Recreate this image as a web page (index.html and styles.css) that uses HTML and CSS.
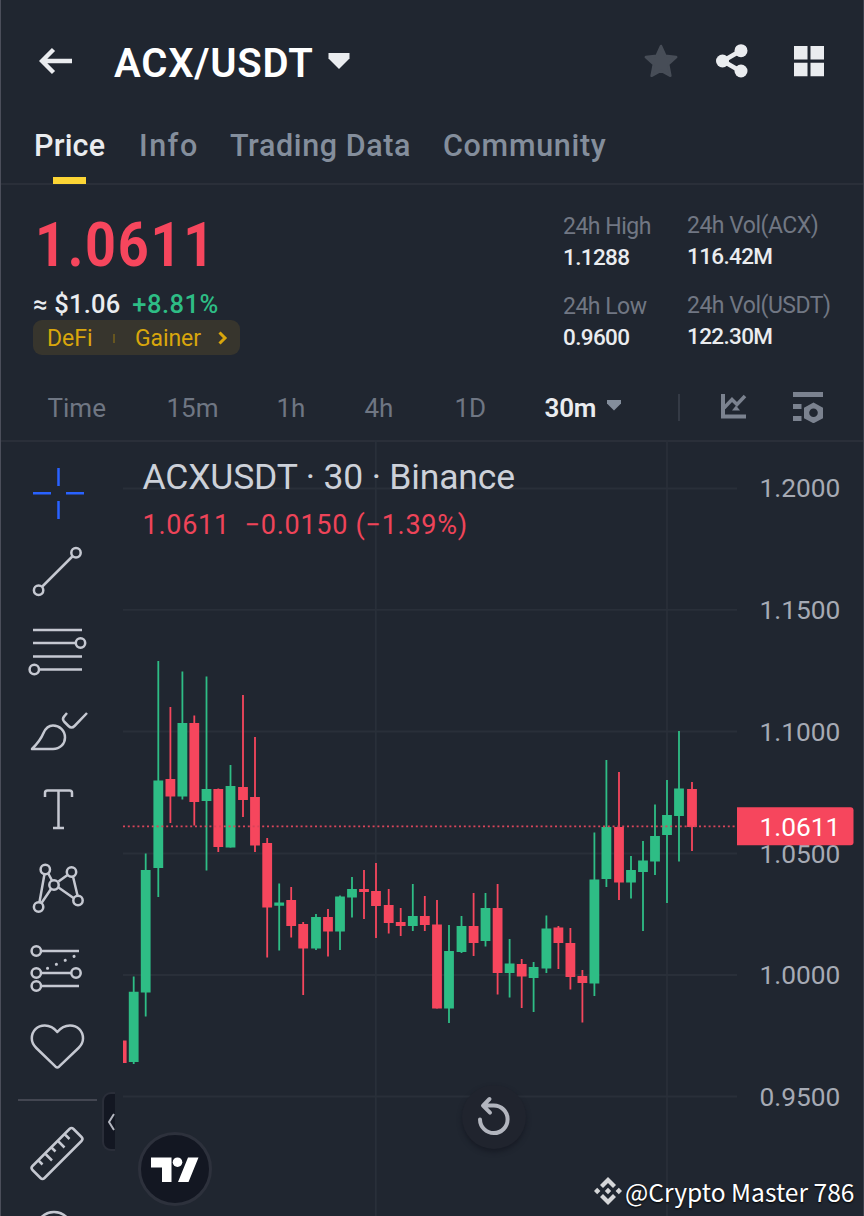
FILE: index.html
```html
<!DOCTYPE html>
<html lang="en">
<head>
<meta charset="utf-8">
<title>ACX/USDT</title>
<link rel="stylesheet" href="styles.css">
</head>
<body>
<div class="app">
  <header class="header">
    <svg class="back" width="34" height="28" viewBox="0 0 34 28"><path d="M14.500 2.500 3 14l11.500 11.500M3 14h30" fill="none" stroke="#eaecef" stroke-width="4.400"/></svg>
    <h1 class="pair">ACX/USDT</h1>
    <svg class="pair-caret" width="22" height="18" viewBox="0 0 22 18"><path d="M.5 1h21v5.500L11 17 .5 6.500z" fill="#eaecef"/></svg>
    <svg class="star" width="34" height="34" viewBox="0 0 34 34"><path d="m17 2 4.400 9.800 10.800 1.200-8 7.300 2.200 11.500L17 26.700 7.600 31.800l2.200-11.500-8-7.300 10.800-1.200z" fill="#474d57" stroke="#474d57" stroke-width="2.500" stroke-linejoin="round"/></svg>
    <svg class="share" width="34" height="34" viewBox="0 0 34 34"><path d="M26 6.500 8 17l18 10.500" fill="none" stroke="#eaecef" stroke-width="4.500"/><g fill="#eaecef"><circle cx="26" cy="6.700" r="6.500"/><circle cx="7.500" cy="17" r="6.500"/><circle cx="26" cy="27" r="6.500"/></g></svg>
    <svg class="apps" width="30" height="31" viewBox="0 0 30 31"><path d="M0 0h13.500v13.500H0zM16.500 0H30v13.500H16.500zM0 16.800h13.500v13.500H0zM16.500 16.800H30v13.500H16.500z" fill="#eaecef"/></svg>
  </header>

  <nav class="tabs">
    <span class="tab tab-price">Price</span>
    <span class="tab tab-info">Info</span>
    <span class="tab tab-data">Trading Data</span>
    <span class="tab tab-comm">Community</span>
  </nav>

  <section class="summary">
    <div class="quote">
      <div class="last"><span class="squeeze">1.0611</span></div>
      <div class="fiat"><span class="usd">≈ $1.06</span><span class="change">+8.81%</span></div>
      <div class="tags">
        <span class="tag-defi">DeFi</span><i class="tag-sep"></i><span class="tag-gain">Gainer</span>
        <svg width="10" height="14" viewBox="0 0 10 14"><path d="m1.500 1.500 5.500 5.500-5.500 5.500" fill="none" stroke="#d9a60c" stroke-width="3"/></svg>
      </div>
    </div>
    <dl class="stats">
      <div><dt>24h High</dt><dd>1.1288</dd></div>
      <div class="raised"><dt>24h Vol(ACX)</dt><dd>116.42M</dd></div>
      <div><dt>24h Low</dt><dd>0.9600</dd></div>
      <div class="raised"><dt>24h Vol(USDT)</dt><dd>122.30M</dd></div>
    </dl>
  </section>

  <nav class="intervals">
    <span class="iv iv-time">Time</span>
    <span class="iv iv-15">15m</span>
    <span class="iv iv-1h">1h</span>
    <span class="iv iv-4h">4h</span>
    <span class="iv iv-1d">1D</span>
    <span class="iv iv-active">30m</span>
    <svg class="iv-caret" width="14" height="11" viewBox="0 0 14 11"><path d="M0 0h14v3.500L7 10.500 0 3.500z" fill="#848e9c"/></svg>
    <i class="iv-sep"></i>
    <svg class="chart-ico" width="26" height="26" viewBox="0 0 26 26"><path d="M2 1v22.500h23" fill="none" stroke="#7b828f" stroke-width="4"/><path d="m3 15 8-8.500 5 5L24 3" fill="none" stroke="#7b828f" stroke-width="3.500"/><path d="m15 12.500 4 5h-8z" fill="#7b828f"/></svg>
    <svg class="set-ico" width="32" height="32" viewBox="0 0 32 32"><path d="M1 1h30v5H1zM1 13h8.500v5H1zM1 25h8.500v5H1z" fill="#7b828f"/><path fill-rule="evenodd" d="m21.500 11.500 9.500 5.300v10.500l-9.500 5-9.500-5V16.800zm0 6a4.300 4.300 0 1 0 0 8.600 4.300 4.300 0 0 0 0-8.600z" fill="#7b828f"/></svg>
  </nav>

  <main class="workspace">
    <aside class="tools">
      <svg class="tool" viewBox="0 453 123 79"><path d="M58.500 468v18M58.500 501v18M33 493.300h18M66 493.300h18" stroke="#2962ff" stroke-width="2.500"/></svg>
      <svg class="tool" viewBox="0 532 123 79"><path d="m42.300 586.500 30-30"/><circle cx="38.600" cy="590.300" r="4.700"/><circle cx="76" cy="552.800" r="4.700"/></svg>
      <svg class="tool" viewBox="0 611 123 79"><path d="M33 630h49M33 643h42.500M33 656.500h49M39 669.500h43"/><circle cx="80.500" cy="643" r="4.700"/><circle cx="34.300" cy="669.500" r="4.700"/></svg>
      <svg class="tool" viewBox="0 690 123 79"><path d="M32 749h21c7 0 12-5 12-11.500 0-7-5.500-12-12-12-5 0-7.500 3-9.500 7.500-2.500 6-7 11.500-11.500 16zM67 713l-2.500 3q-3 3 0 6l4 4q3 3 6 0L87 713"/></svg>
      <svg class="tool" viewBox="0 769 123 79"><path d="M45 797v-4q0-2.500 2.500-2.500h22q2.500 0 2.500 2.500v4M58.500 791v37M53 828h11"/></svg>
      <svg class="tool" viewBox="0 848 123 79"><path d="m44.500 874-5 28M48 873l4 7.500M58.500 881.500l9-6.500M73 876.500l4.500 19M41.500 903l9.500-14M58.500 887.500 73.500 898"/><circle cx="45.300" cy="869.500" r="4.700"/><circle cx="71.500" cy="872" r="4.700"/><circle cx="54" cy="885" r="4.700"/><circle cx="38.600" cy="907" r="4.700"/><circle cx="78" cy="900.500" r="4.700"/></svg>
      <svg class="tool" viewBox="0 927 123 79"><path d="M41 951h38M41 973h30M41 986h38"/><path class="dots" d="m47.500 968.300 31-14"/><circle cx="36.300" cy="951" r="4.700"/><circle cx="36.300" cy="973" r="4.700"/><circle cx="76" cy="973" r="4.700"/><circle cx="36.300" cy="986" r="4.700"/></svg>
      <svg class="tool" viewBox="0 1006 123 79"><path d="M57.300 1032c-4-5-8-6.500-12.500-6.500-7.500 0-13 5.500-13 13 0 4 2 7 4.500 9.500l19.300 18.700q1.700 1.500 3.400 0L78.500 1048c2.500-2.500 4.500-5.500 4.500-9.500 0-7.500-5.500-13-13-13-5 0-9 2-12.700 6.500z"/></svg>
      <i class="tools-line"></i>
      <svg class="tool tool-ruler" viewBox="0 1114 123 79"><path d="m32.500 1166 37-37q2-2 4 0l8 8q2 2 0 4l-37 37q-2 2-4 0l-8-8q-2-2 0-4zM38.500 1160.500l4 4M45.500 1154l6.500 6.500M51.500 1147.500l4 4M58 1141l6.500 6.500M65 1134.500l4.500 4.500"/></svg>
      <svg class="tool tool-zoom" viewBox="0 1193 123 23"><circle cx="54" cy="1230" r="18"/></svg>
      <button class="collapse" aria-label="Collapse"><svg width="10" height="18" viewBox="0 0 10 18"><path d="M9 1 4 9l5 8" fill="none" stroke="#b2b5be" stroke-width="2"/></svg></button>
    </aside>

    <div class="chart">
      <svg class="plot" width="741" height="776" viewBox="123 440 741 776">
        <path class="grid" d="M123 488.500H737M123 609.800H737M123 731.500H737M123 853.500H737M123 975H737M123 1096.500H737M375.800 440V1216M667 440V1216"/>
        <path class="wick up" d="M133.700 976.500V1064M145.700 853.500V1016.500M158.300 661V897M182.400 671.500V799.500M206.500 676.500V870.500M230.500 765V847.500M279.200 883.500V950.500M316 914V950M340 895.500V950M352 877V917.500M412.800 884V931M449 925V1023M461.500 916V953M485.500 893V946.500M509.600 939V997.500M533.600 962V1012M546.400 915.500V973M594.400 832.500V996M606.400 760V887M631 856V898.500M643 841V931M655 804.500V875M667 780V903M679 731V861.500"/>
        <path class="wick down" d="M170.400 707V823M194.300 715.500V825.500M218.300 788.500V852M243 695V817M255 737V852M267.200 838V957.500M291.200 887V937.500M303.200 922V995M328 909V956.500M364 870V919M376 863V938M388.700 889V933.500M400.700 908V936M424.800 896V931M437 900V1008.500M473.600 893V956M497.600 884V994.500M521.700 959V1008M558.400 926V969M570.400 928V989.500M582.400 970V1022.500M619 772V900M692 782V851"/>
        <path class="body up" d="M133.700 991.700V1062M145.700 870V992.500M158.300 780.500V868M182.400 723V796.500M206.500 789V801M230.500 786V847.500M279.200 902.500V905.800M316 917V948.500M340 896.500V931.500M352 889V897.500M412.800 916V926M449 951V1008.500M461.500 926V952M485.500 908V941M509.600 963.500V973M533.600 967V978M546.400 928.500V968.500M594.400 879.500V983.500M606.400 827V879M631 870V882.500M643 860.500V872M655 836V861.500M667 815V835M679 788.500V816"/>
        <path class="body down" d="M170.400 779V796.500M194.300 723V802M218.300 789V847M243 787V800M255 797V845.500M267.200 843V907.500M291.200 900V926M303.200 924V948.500M328 917V931.500M364 889V892M376 891V906M388.700 905V923M400.700 922V926M424.800 916V925M437 924.500V1008.500M473.600 926V943M497.600 908V973M521.700 964V976.500M558.400 927.500V943M570.400 943V977M582.400 976V983M619 827V882.500M692 789V827"/>
        <rect class="first" x="123" y="1040.500" width="3.600" height="22.500"/>
        <path class="price-line" d="M123 826.300H736"/>
        <g class="axis"><text x="759.500" y="497">1.2000</text><text x="759.500" y="619">1.1500</text><text x="759.500" y="741">1.1000</text><text x="759.500" y="862.500">1.0500</text><text x="759.500" y="984">1.0000</text><text x="759.500" y="1106">0.9500</text></g>
        <path class="price-tag" d="M737 807.300H850.500q3 0 3 3v32q0 3-3 3H737z"/>
        <text class="price-tag-text" x="759.500" y="835.500">1.0611</text>
      </svg>
      <div class="legend">
        <div class="legend-title">ACXUSDT · 30 · Binance</div>
        <div class="legend-values">1.0611&nbsp; −0.0150 (−1.39%)</div>
      </div>
      <div class="tv-logo"><svg width="48" height="26" viewBox="0 0 48 26"><path d="M0 .5h20.500V25H11V10.500H0zM37 .5h10.500L37.500 25H27z" fill="#fff"/><circle cx="26.500" cy="5.200" r="4.800" fill="#fff"/></svg></div>
      <button class="reset" aria-label="Reset"><svg width="36" height="42" viewBox="0 0 36 42"><path d="M4 23.500a13.800 13.800 0 1 0 13.800-14H8M13.500 3 7 9.700l7 7" fill="none" stroke="#b2b5be" stroke-width="4" stroke-linecap="round" stroke-linejoin="round"/></svg></button>
      <div class="watermark"><svg width="28" height="28" viewBox="0 0 28 28" fill="#d5d6d8"><path d="m14 0 8 8-3 3-5-5-5 5-3-3zM14 28l8-8-3-3-5 5-5-5-3 3zM3.200 10.800 6.400 14l-3.200 3.200L0 14zM24.800 10.800 28 14l-3.200 3.200-3.200-3.200zM14 10.800l3.200 3.200-3.200 3.200-3.200-3.200z"/></svg><span>@Crypto Master 786</span></div>
    </div>
  </main>
</div>
</body>
</html>
```
FILE: styles.css
```css
* { box-sizing: border-box; }
body { margin: 0; background: #202630; }
.app {
  width: 864px; height: 1216px; overflow: hidden;
  display: flex; flex-direction: column;
  background: #202630; color: #eaecef;
  border-left: 1px solid #4b4e5a; border-right: 1px solid #3b3f4a;
  font-family: Roboto, "Liberation Sans", sans-serif;
}
span { white-space: nowrap; }
h1, dl, dd { margin: 0; }
button { border: 0; padding: 0; }
svg { flex: none; display: block; }

.header { height: 122px; flex: none; display: flex; align-items: center; padding: 0 39px 0 38px; }
.pair { margin: 5px 0 0 41px; width: 200px; font-size: 40px; line-height: 48px; font-weight: 600; letter-spacing: .8px; color: #fff; white-space: nowrap; }
.pair-caret { margin-left: 14px; }
.star { margin-left: auto; }
.share { margin-left: 37px; }
.apps { margin-left: 45px; }

.tabs { height: 63px; flex: none; display: flex; border-bottom: 2px solid #2a2f39; padding: 1px 0 0 33px; font-size: 30.500px; line-height: 46px; font-weight: 500; color: #848e9c; }
.tab { position: relative; }
.tab-price { width: 105px; color: #eaecef; letter-spacing: .2px; }
.tab-price::after { content: ""; position: absolute; left: 19px; bottom: -1px; width: 33px; height: 7px; background: #fcd535; }
.tab-info { width: 91px; letter-spacing: 1.500px; }
.tab-data { width: 213px; letter-spacing: .6px; }
.tab-comm { letter-spacing: .7px; }

.summary { height: 190px; flex: none; display: flex; justify-content: space-between; padding: 25px 23px 0 32px; }
.last { height: 72px; padding-left: 2px; font-size: 62px; line-height: 70px; font-weight: 700; color: #f6465d; }
.squeeze { display: inline-block; transform: scaleX(.87); transform-origin: 0 50%; letter-spacing: 2px; }
.fiat { height: 38px; display: flex; gap: 12px; padding-top: 5px; font-size: 25.500px; line-height: 34px; font-weight: 500; }
.usd { letter-spacing: .2px; }
.change { color: #2ebd85; letter-spacing: .5px; }
.tags { width: 207px; height: 35px; padding: 1px 0 0 14px; display: flex; align-items: center; border-radius: 9px; background: #37352d; color: #d9a60c; font-size: 23px; }
.tag-defi { width: 66px; }
.tag-sep { width: 2px; height: 9px; background: #67561f; margin-right: 20px; }
.tag-gain { width: 83px; letter-spacing: -.1px; }

.stats { width: 277px; padding-top: 1px; display: grid; grid-template-columns: 124px 153px; grid-auto-rows: 80px; font-size: 23px; line-height: 31px; }
.stats > div { white-space: nowrap; }
.raised { margin-top: -1px; }
.stats dt { color: #717783; letter-spacing: -.5px; }
.stats dd { color: #eaecef; font-size: 22.500px; letter-spacing: -.65px; font-weight: 500; }

.intervals { height: 67px; flex: none; display: flex; align-items: center; border-bottom: 2px solid #2a2f39; padding-left: 46.500px; font-size: 26px; color: #6f7683; }
.iv-time { width: 119px; }
.iv-15 { width: 110px; }
.iv-1h { width: 88px; }
.iv-4h { width: 90px; }
.iv-1d { width: 90px; }
.iv-active { width: 62px; color: #eaecef; font-weight: 600; letter-spacing: -.2px; }
.iv-caret { margin-top: -4px; }
.iv-sep { width: 2px; height: 27px; margin-left: 57px; background: #343a45; }
.chart-ico { margin: -3px 0 0 41.500px; }
.set-ico { margin: -2px 0 0 45px; }

.workspace { flex: 1; display: flex; margin-top: -2px; }
.tools { position: relative; width: 123px; margin-left: -1px; padding-top: 13px; flex: none; }
.tool { width: 123px; height: 79px; fill: none; stroke: #c5c8d1; stroke-width: 2.500; stroke-linejoin: round; }
.dots { stroke-width: 3; stroke-linecap: round; stroke-dasharray: .1 9.600; }
.tools-line { display: block; width: 79px; height: 2px; margin: 14px 0 13px 18px; background: #434651; }
.tool-zoom { height: 23px; }
.collapse { position: absolute; left: 102px; top: 652px; width: 13px; height: 59px; overflow: hidden; border: 2px solid #2a2e39; border-right: 0; border-radius: 9px 0 0 9px; background: #131722; display: flex; align-items: center; justify-content: flex-end; }

.chart { position: relative; width: 741px; flex: none; }
.grid { stroke: #292f39; stroke-width: 1.800; fill: none; }
.wick { stroke-width: 1.800; }
.body { stroke-width: 9.800; }
.up { stroke: #2ebd85; }
.down { stroke: #f6465d; }
.first { fill: #f6465d; }
.price-line { stroke: #d8455a; stroke-width: 1.700; stroke-dasharray: 2 2.800; }
.axis { fill: #a6aab4; font-size: 26.300px; }
.price-tag { fill: #f6465d; }
.price-tag-text { fill: #fff; font-size: 26.300px; }
.legend { position: absolute; left: 19.500px; top: 13px; white-space: nowrap; }
.legend-title { font-size: 35.500px; line-height: 48px; letter-spacing: -.17px; color: #cdd1d9; }
.legend-values { font-size: 27px; line-height: 48px; letter-spacing: .72px; color: #ee4459; }
.tv-logo { position: absolute; left: 15px; top: 692px; width: 74px; height: 74px; border-radius: 50%; border: 3px solid #2d313c; background: #131722; display: flex; align-items: center; justify-content: center; }
.tv-logo svg { margin-top: 2px; }
.reset { position: absolute; left: 339px; top: 645px; width: 64px; height: 64px; border-radius: 50%; background: #20242e; box-shadow: 0 3px 5px #171b25; display: flex; align-items: center; justify-content: center; }
.reset svg { margin-top: -1px; }
.watermark { position: absolute; left: 471px; top: 732px; display: flex; align-items: center; gap: 3px; font-family: "Noto Sans CJK SC", sans-serif; font-size: 24.600px; line-height: 38px; color: #fff; text-shadow: 0 1px 2px #000; }
```
